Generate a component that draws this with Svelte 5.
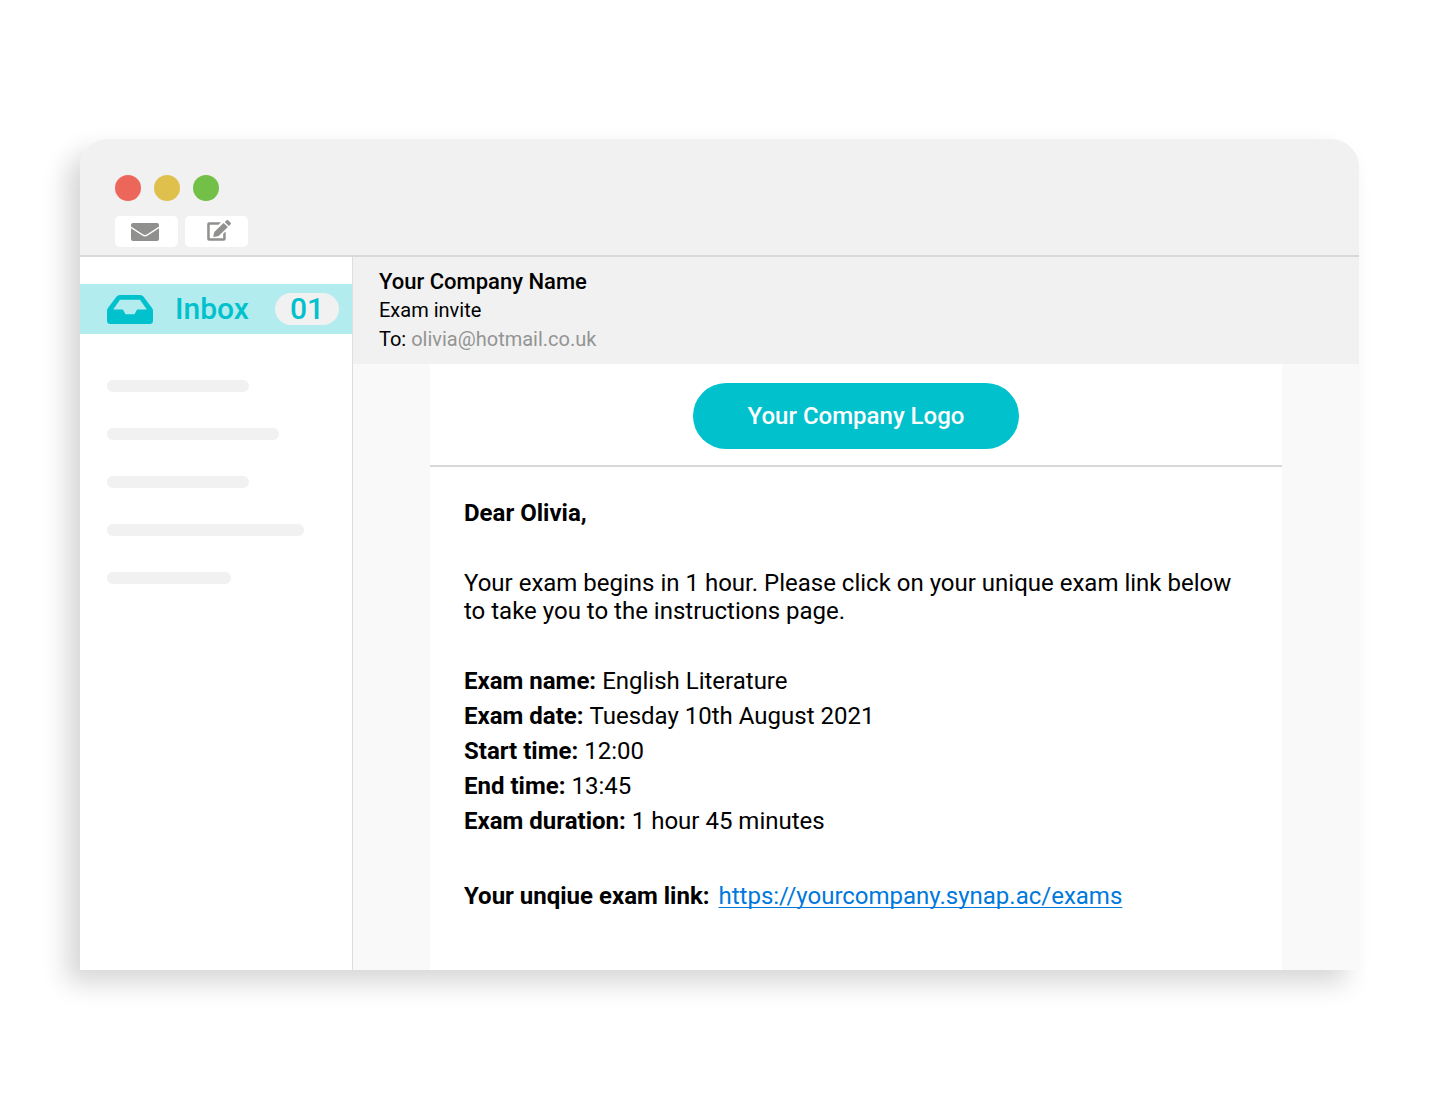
<script>
  const lights = ['red', 'yellow', 'green'];

  // placeholder folders in the sidebar, widths in px
  const folders = [142, 172, 142, 197, 124];

  const details = [
    { label: 'Exam name', value: 'English Literature' },
    { label: 'Exam date', value: 'Tuesday 10th August 2021' },
    { label: 'Start time', value: '12:00' },
    { label: 'End time', value: '13:45' },
    { label: 'Exam duration', value: '1 hour 45 minutes' },
  ];
</script>

<main>
  <div class="window">
    <header class="titlebar">
      <div class="lights" aria-hidden="true">
        {#each lights as light}
          <span class="light {light}"></span>
        {/each}
      </div>
      <div class="tools">
        <button aria-label="Mail">
          <svg width="28" height="18" viewBox="0 0 28 18" fill="currentColor">
            <path d="M2 0h24a2 2 0 0 1 2 2v1.4L16.200 11.200Q14 12.800 11.800 11.200L0 3.400V2a2 2 0 0 1 2-2z" />
            <path d="M0 5.200l11.200 7.400q2.800 1.900 5.600 0L28 5.200V16a2 2 0 0 1-2 2H2a2 2 0 0 1-2-2z" />
          </svg>
        </button>
        <button aria-label="Compose">
          <svg width="24" height="21" viewBox="0 0 24 21" fill="currentColor">
            <path d="M14 2.300H2A1.800 1.800 0 0 0 .2 4.100v14.900A1.800 1.800 0 0 0 2 20.800h14.900a1.800 1.800 0 0 0 1.800-1.800v-7.600l-2.500 2.400v4.500H2.700V4.800h8.800z" />
            <path d="M16.600 3l4.300 4-9.300 9-4.600 1a.6.6 0 0 1-.7-.7l1-4.400z" />
            <path d="M17.700 2l1.500-1.400a1.700 1.700 0 0 1 2.300 0l1.900 1.800a1.500 1.500 0 0 1 0 2.200L21.900 6z" />
          </svg>
        </button>
      </div>
    </header>

    <div class="body">
      <nav class="sidebar" aria-label="Folders">
        <a class="inbox" href="#inbox">
          <svg width="46" height="29" viewBox="0 0 46 29" fill="currentColor">
            <path
              fill-rule="evenodd"
              d="M12.800 0h20.400a4 4 0 0 1 3.200 1.600l8.800 11.700a4 4 0 0 1 .8 2.400V25.500a3.500 3.500 0 0 1-3.500 3.500h-39A3.500 3.500 0 0 1 0 25.500V15.700a4 4 0 0 1 .8-2.400L9.600 1.600A4 4 0 0 1 12.800 0zM13 4.800L6.200 14.500H15.900L18.500 19.300h9l2.600-4.800h9.700L33 4.800z"
            />
          </svg>
          <span class="name">Inbox</span>
          <span class="badge">01</span>
        </a>
        <div class="folders" aria-hidden="true">
          {#each folders as width}
            <span class="bar" style="width: {width}px"></span>
          {/each}
        </div>
      </nav>

      <section class="mail">
        <div class="meta">
          <h1>Your Company Name</h1>
          <p>Exam invite</p>
          <p>To: <span class="address">olivia@hotmail.co.uk</span></p>
        </div>

        <article>
          <div class="brand">
            <div class="logo">Your Company Logo</div>
          </div>
          <div class="message">
            <p class="greeting">Dear Olivia,</p>
            <p class="intro">
              Your exam begins in 1 hour. Please click on your unique exam link below to take you to
              the instructions page.
            </p>
            <dl>
              {#each details as { label, value }}
                <div>
                  <dt>{label}:</dt>
                  <dd>{value}</dd>
                </div>
              {/each}
            </dl>
            <p class="link">
              <strong>Your unqiue exam link:</strong>
              <a href="https://yourcompany.synap.ac/exams">https://yourcompany.synap.ac/exams</a>
            </p>
          </div>
        </article>
      </section>
    </div>
  </div>
</main>

<style>
  :global(body) {
    background: #fff;
  }

  main {
    padding: 139px 78px 125px 80px;
    font-family: Roboto, sans-serif;
    color: #000;
  }

  h1,
  p,
  dl,
  dd {
    margin: 0;
  }

  .window {
    border-radius: 28px 28px 0 0;
    background: #fff;
    box-shadow: -13px 13px 26px rgba(0, 0, 0, 0.16);
  }

  .titlebar {
    padding: 36px 35px 8px;
    border-bottom: 2px solid #d9d9d9;
    border-radius: 28px 28px 0 0;
    background: #f1f1f1;
  }

  .lights {
    display: flex;
    gap: 13px;
    margin-bottom: 15px;
  }

  .light {
    width: 26px;
    height: 26px;
    border-radius: 50%;
  }

  .red {
    background: #ed665a;
  }

  .yellow {
    background: #e0c04c;
  }

  .green {
    background: #72c048;
  }

  .tools {
    display: flex;
    gap: 7px;
  }

  .tools button {
    display: flex;
    align-items: center;
    justify-content: center;
    width: 63px;
    height: 31px;
    padding: 0 3px 0 0;
    border: none;
    border-radius: 5px;
    background: #fff;
    color: #90908e;
    cursor: pointer;
  }

  .tools button + button {
    padding: 0 0 2px 4px;
  }

  .body {
    display: flex;
    min-height: 713px;
  }

  .sidebar {
    flex: none;
    width: 272px;
    padding-top: 27px;
    border-right: 1px solid #dedede;
  }

  .inbox {
    display: flex;
    align-items: center;
    height: 50px;
    padding: 0 13px 0 27px;
    background: #b2ecee;
    color: #00c1cc;
    font-size: 30px;
    font-weight: 500;
    line-height: 32px;
    text-decoration: none;
  }

  .name {
    margin-left: 22px;
  }

  .badge {
    width: 64px;
    margin-left: auto;
    border-radius: 16px;
    background: #f1f1f1;
    text-align: center;
  }

  .folders {
    display: flex;
    flex-direction: column;
    gap: 36px;
    padding: 46px 27px;
  }

  .bar {
    height: 12px;
    border-radius: 6px;
    background: #f1f1f1;
  }

  .mail {
    display: flex;
    flex: 1;
    flex-direction: column;
    background: #f9f9f9;
  }

  .meta {
    padding: 10px 26px;
    background: #f1f1f1;
    font-size: 20px;
    line-height: 29px;
  }

  h1 {
    font-size: 22px;
    font-weight: 500;
  }

  .address {
    color: #949494;
  }

  article {
    flex: 1;
    margin: 0 77px;
    background: #fff;
    font-size: 24px;
    line-height: 28px;
  }

  .brand {
    display: flex;
    justify-content: center;
    padding: 19px 0 16px;
    border-bottom: 2px solid #d9d9d9;
  }

  .logo {
    padding: 0 55px;
    border-radius: 33px;
    background: #00c1cc;
    color: #fff;
    font-weight: 500;
    line-height: 66px;
  }

  .message {
    padding: 32px 34px;
  }

  .intro {
    margin: 42px 0 39px;
  }

  .greeting,
  dt,
  strong {
    font-weight: 700;
  }

  dl > div {
    display: flex;
    gap: 6px;
    line-height: 35px;
  }

  .link {
    display: flex;
    flex-wrap: wrap;
    gap: 9px;
    margin-top: 43px;
  }

  .link a {
    color: #0078dc;
    text-decoration-thickness: 1px;
    text-decoration-skip-ink: none;
    text-underline-offset: 3px;
  }
</style>
